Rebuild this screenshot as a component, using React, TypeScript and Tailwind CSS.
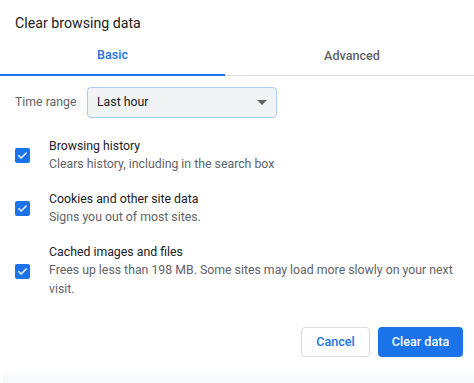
import React from "react"

const items = [
  {
    title: "Browsing history",
    desc: "Clears history, including in the search box",
  },
  {
    title: "Cookies and other site data",
    desc: "Signs you out of most sites.",
  },
  {
    title: "Cached images and files",
    desc: "Frees up less than 198 MB. Some sites may load more slowly on your next visit.",
  },
]

function Checkbox() {
  return (
    <div className="flex h-[15px] w-[15px] shrink-0 items-center justify-center rounded-[2px] bg-[#1a73e8]">
      <svg width="11" height="11" viewBox="0 0 24 24" fill="none">
        <path
          d="M4 12.5l5 5L20 6.5"
          stroke="white"
          strokeWidth="3.2"
          strokeLinecap="round"
          strokeLinejoin="round"
        />
      </svg>
    </div>
  )
}

export default function App() {
  return (
    <div
      className="flex h-[383px] w-[474px] flex-col bg-white text-[12.3px] text-[#202124]"
      style={{ fontFamily: "Roboto, 'Liberation Sans', sans-serif" }}
    >
      <div className="pl-[15px] pt-[13px] text-[14.2px] leading-[20px] text-[#202124]">
        Clear browsing data
      </div>

      <div className="mt-[4px] flex h-[39px] border-b border-[#e0e0e0]">
        <div className="-mb-px flex w-[225px] items-center justify-center border-b-2 border-[#1a73e8] text-[12.6px] font-medium text-[#1a73e8]">
          Basic
        </div>
        <div className="flex flex-1 items-center justify-center pl-[5px] text-[12.6px] font-medium text-[#5f6368]">
          Advanced
        </div>
      </div>

      <div className="mt-[11px] flex items-center pl-[15px]">
        <span className="w-[72px] text-[#5f6368]">Time range</span>
        <div className="flex h-[31px] w-[190px] items-center justify-between rounded-[4px] border border-[#aecbfa] bg-[#f1f3f4] pl-[9px] pr-[9px]">
          <span className="text-[#202124]">Last hour</span>
          <svg width="10" height="5" viewBox="0 0 10 5">
            <path d="M0 0h10L5 5z" fill="#5f6368" />
          </svg>
        </div>
      </div>

      <div className="mt-[19px] flex flex-col gap-[16px] pl-[15px] pr-[11px]">
        {items.map((item) => (
          <div key={item.title} className="flex items-center gap-[19px]">
            <Checkbox />
            <div className="flex flex-col">
              <span className="leading-[18px] text-[#202124]">{item.title}</span>
              <span className="leading-[19px] text-[#5f6368]">{item.desc}</span>
            </div>
          </div>
        ))}
      </div>

      <div className="mt-[28px] flex justify-end gap-[8px] pr-[11px]">
        <button className="h-[30px] w-[69px] rounded-[4px] border border-[#dadce0] bg-white text-[12.6px] font-medium text-[#1a73e8]">
          Cancel
        </button>
        <button className="h-[30px] w-[85px] rounded-[4px] bg-[#1a73e8] text-[12.6px] font-medium text-white">
          Clear data
        </button>
      </div>

      <div className="mt-auto ml-[3px] h-[10px] bg-[#f8f9fa]" />
    </div>
  )
}
